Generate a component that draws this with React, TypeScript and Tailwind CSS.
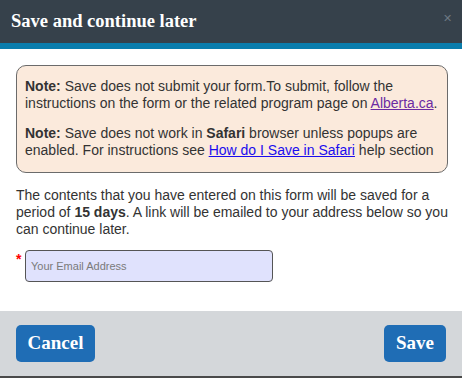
export default function App() {
  return (
    <div className="w-[462px] h-[378px] bg-white flex flex-col font-['Liberation_Sans',Arial,sans-serif] text-[#333]">
      {/* Header */}
      <div className="h-[43px] bg-[#36414b] flex items-center justify-between pl-[11px] pr-[10px] shrink-0">
        <h2 className="text-white font-bold text-[18.5px] font-['Liberation_Serif','Times_New_Roman',serif] leading-none pb-[1px]">
          Save and continue later
        </h2>
        <span className="text-[#6d7882] text-[11px] leading-none mb-[6px]">✕</span>
      </div>
      <div className="h-[6px] bg-[#0b7dac] shrink-0" />

      {/* Body */}
      <div className="flex-1 pl-4 pr-[8px] pt-[16px]">
        <div className="mr-[6px] bg-[#fbeadc] border border-[#6b6b6b] rounded-[10px] pl-[8px] pr-0 pt-[12px] pb-[13px] text-[14px] leading-[17px] text-[#333]">
          <p>
            <b>Note:</b> Save does not submit your form.To submit, follow the instructions on the form or the related program page on{' '}
            <a className="text-[#6b2aa3] underline" href="#">Alberta.ca</a>.
          </p>
          <p className="mt-[13px]">
            <b>Note:</b> Save does not work in <b>Safari</b> browser unless popups are enabled. For instructions see{' '}
            <a className="text-[#1a0dee] underline" href="#">How do I Save in Safari</a> help section
          </p>
        </div>

        <p className="mt-[14px] text-[14px] leading-[17px] text-[#333]">
          The contents that you have entered on this form will be saved for a period of <b>15 days</b>. A link will be emailed to your address below so you can continue later.
        </p>

        <div className="flex items-start mt-[12px]">
          <span className="text-[#ff0000] text-[14px] font-bold leading-none mt-[2px] w-[9px]">*</span>
          <input
            type="text"
            placeholder="Your Email Address"
            className="w-[248px] h-[32px] bg-[#e0e2fd] border border-[#555] rounded-[4px] px-[5px] text-[11px] placeholder:text-[#7a7a7a] outline-none"
          />
        </div>
      </div>

      {/* Footer */}
      <div className="h-[67px] bg-[#d4d7da] border-b-2 border-[#4a4a4a] flex items-center justify-between px-4 shrink-0">
        <button className="w-[79px] h-[37px] bg-[#1f6db5] rounded-[5px] text-white font-bold text-[19px] font-['Liberation_Serif','Times_New_Roman',serif]">
          Cancel
        </button>
        <button className="w-[62px] h-[37px] bg-[#1f6db5] rounded-[5px] text-white font-bold text-[19px] font-['Liberation_Serif','Times_New_Roman',serif]">
          Save
        </button>
      </div>
    </div>
  );
}
